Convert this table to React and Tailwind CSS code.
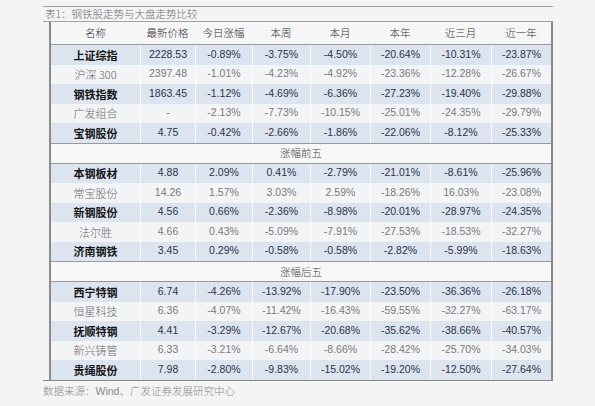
const cols = ['w-[89px]', 'w-[55px]', 'w-[57px]', 'w-[58px]', 'w-[60px]', 'w-[60px]', 'w-[61px]', 'w-[60px]'];

const header = ['名称', '最新价格', '今日涨幅', '本周', '本月', '本年', '近三月', '近一年'];

const groups = [
  {
    title: null,
    rows: [
      { bold: true, cells: ['上证综指', '2228.53', '-0.89%', '-3.75%', '-4.50%', '-20.64%', '-10.31%', '-23.87%'] },
      { bold: false, cells: ['沪深 300', '2397.48', '-1.01%', '-4.23%', '-4.92%', '-23.36%', '-12.28%', '-26.67%'] },
      { bold: true, cells: ['钢铁指数', '1863.45', '-1.12%', '-4.69%', '-6.36%', '-27.23%', '-19.40%', '-29.88%'] },
      { bold: false, cells: ['广发组合', '-', '-2.13%', '-7.73%', '-10.15%', '-25.01%', '-24.35%', '-29.79%'] },
      { bold: true, cells: ['宝钢股份', '4.75', '-0.42%', '-2.66%', '-1.86%', '-22.06%', '-8.12%', '-25.33%'] },
    ],
  },
  {
    title: '涨幅前五',
    rows: [
      { bold: true, cells: ['本钢板材', '4.88', '2.09%', '0.41%', '-2.79%', '-21.01%', '-8.61%', '-25.96%'] },
      { bold: false, cells: ['常宝股份', '14.26', '1.57%', '3.03%', '2.59%', '-18.26%', '16.03%', '-23.08%'] },
      { bold: true, cells: ['新钢股份', '4.56', '0.66%', '-2.36%', '-8.98%', '-20.01%', '-28.97%', '-24.35%'] },
      { bold: false, cells: ['法尔胜', '4.66', '0.43%', '-5.09%', '-7.91%', '-27.53%', '-18.53%', '-32.27%'] },
      { bold: true, cells: ['济南钢铁', '3.45', '0.29%', '-0.58%', '-0.58%', '-2.82%', '-5.99%', '-18.63%'] },
    ],
  },
  {
    title: '涨幅后五',
    rows: [
      { bold: true, cells: ['西宁特钢', '6.74', '-4.26%', '-13.92%', '-17.90%', '-23.50%', '-36.36%', '-26.18%'] },
      { bold: false, cells: ['恒星科技', '6.36', '-4.07%', '-11.42%', '-16.43%', '-59.55%', '-32.27%', '-63.17%'] },
      { bold: true, cells: ['抚顺特钢', '4.41', '-3.29%', '-12.67%', '-20.68%', '-35.62%', '-38.66%', '-40.57%'] },
      { bold: false, cells: ['新兴铸管', '6.33', '-3.21%', '-6.64%', '-8.66%', '-28.42%', '-25.70%', '-34.03%'] },
      { bold: true, cells: ['贵绳股份', '7.98', '-2.80%', '-9.83%', '-15.02%', '-19.20%', '-12.50%', '-27.64%'] },
    ],
  },
];

const cjk = "font-['Noto_Sans_CJK_SC',sans-serif]";
const num = "font-['Liberation_Sans','Noto_Sans_CJK_SC',sans-serif]";

function Row({ row }) {
  return (
    <div className={`flex h-[19.5px] items-center ${row.bold ? 'bg-[#dce4ef]' : 'bg-[#f3f4f6]'}`}>
      {row.cells.map((c, i) => (
        <div
          key={i}
          className={`${cols[i]} h-full flex items-center justify-center ${i > 0 ? 'border-l border-white/80' : ''} ${
            i === 0
              ? `${cjk} text-[11px] ${row.bold ? 'font-bold text-[#151515]' : 'font-light text-[#6a6a6a]'}`
              : `${num} text-[10.5px] ${row.bold ? 'text-[#2a3346]' : 'text-[#7a7a7a]'}`
          }`}
        >
          {c}
        </div>
      ))}
    </div>
  );
}

export default function App() {
  return (
    <div className="w-[595px] h-[406px] bg-[#f4f4f4] pt-[6px] pl-[43px]">
      <div className="w-[510px]">
        <div className={`h-[16px] border-t border-b border-[#a0a0a0] flex items-center pl-[2px] ${cjk} text-[10.5px] font-light text-[#6e6e6e] leading-none`}>
          表1：钢铁股走势与大盘走势比较
        </div>
        <div className="ml-[6px] border-l-2 border-r-2 border-[#8a8a8a]">
          <div className={`flex h-[23px] items-center bg-[#f6f6f6] border-b-[1.5px] border-[#9a9a9a] ${cjk} text-[10.5px] font-light text-[#333]`}>
            {header.map((h, i) => (
              <div key={i} className={`${cols[i]} text-center`}>
                {h}
              </div>
            ))}
          </div>
          {groups.map((g, gi) => (
            <div key={gi}>
              {g.title && (
                <div className={`h-[21px] flex items-center justify-center bg-[#f7f7f7] border-t-[1.5px] border-b-[1.5px] border-[#999] ${cjk} text-[10.5px] font-light text-[#444]`}>
                  {g.title}
                </div>
              )}
              {g.rows.map((r, ri) => (
                <Row key={ri} row={r} />
              ))}
            </div>
          ))}
        </div>
        <div className={`border-t-[1.5px] border-[#8a8a8a] pt-[3px] ${cjk} text-[10.5px] font-light text-[#8a8a8a] leading-[14px]`}>
          数据来源：<span className={num}>Wind</span>、广发证券发展研究中心
        </div>
      </div>
    </div>
  );
}
